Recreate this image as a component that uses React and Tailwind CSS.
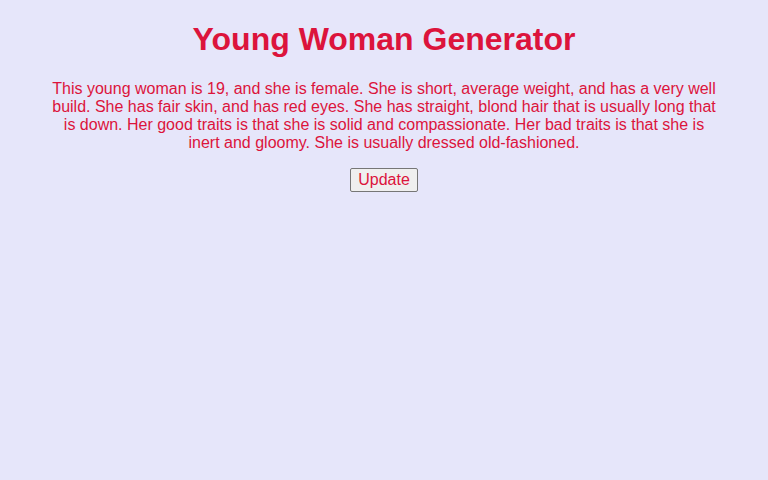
export default function App() {
  return (
    <div className="min-h-[480px] bg-[#e6e6fa] text-[#dc143c] text-center pt-[21px] px-[48px]" style={{ fontFamily: '"Liberation Sans", Arial, sans-serif' }}>
      <h1 className="text-[32px] font-bold leading-[37px]">Young Woman Generator</h1>
      <p className="mt-[22px] text-[16px] leading-[18px]">
        This young woman is 19, and she is female. She is short, average weight, and has a very well build. She has fair skin, and has red eyes. She has straight, blond hair that is usually long that is down. Her good traits is that she is solid and compassionate. Her bad traits is that she is inert and gloomy. She is usually dressed old-fashioned.
      </p>
      <button className="mt-[16px] text-[16px] leading-[18px] px-[7px] py-[2px] h-[24px] bg-[#efefef] border border-[#767676] rounded-[2px] text-[#dc143c]">
        Update
      </button>
    </div>
  );
}
